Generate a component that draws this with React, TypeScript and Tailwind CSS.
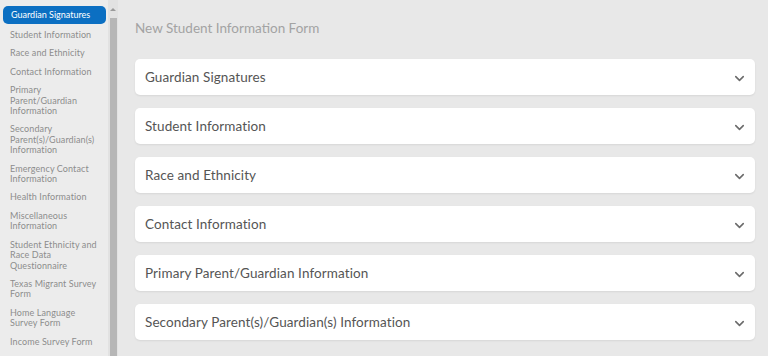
import React from 'react';
import { ChevronDown } from 'lucide-react';

const navItems: string[][] = [
  ['Guardian Signatures'],
  ['Student Information'],
  ['Race and Ethnicity'],
  ['Contact Information'],
  ['Primary', 'Parent/Guardian', 'Information'],
  ['Secondary', 'Parent(s)/Guardian(s)', 'Information'],
  ['Emergency Contact', 'Information'],
  ['Health Information'],
  ['Miscellaneous', 'Information'],
  ['Student Ethnicity and', 'Race Data', 'Questionnaire'],
  ['Texas Migrant Survey', 'Form'],
  ['Home Language', 'Survey Form'],
  ['Income Survey Form'],
  ['Food Distribution Form'],
];

const sections = [
  'Guardian Signatures',
  'Student Information',
  'Race and Ethnicity',
  'Contact Information',
  'Primary Parent/Guardian Information',
  'Secondary Parent(s)/Guardian(s) Information',
];

export default function App() {
  return (
    <div className="w-[768px] h-[356px] overflow-hidden flex bg-[#e8e8e8] font-['Lato',sans-serif]">
      {/* Sidebar */}
      <div className="w-[108px] shrink-0 bg-[#ececec] pt-[6px] flex flex-col gap-[8px]">
        {navItems.map((lines, i) =>
          i === 0 ? (
            <div
              key={i}
              className="ml-[3px] -mb-[2px] w-[103px] h-[18px] rounded-[5px] bg-[#0b6fc2] text-white text-[9px] leading-[18px] pl-[8px] whitespace-nowrap"
            >
              {lines[0]}
            </div>
          ) : (
            <div key={i} className="pl-[10px] text-[9px] leading-[10.4px] text-[#8c8c8c] whitespace-nowrap tracking-[0.1px]">
              {lines.map((l, j) => (
                <div key={j}>{l}</div>
              ))}
            </div>
          )
        )}
      </div>

      {/* Scrollbar */}
      <div className="w-[10px] shrink-0 bg-[#e2e2e2] flex flex-col items-center">
        <div className="h-[18px] flex items-start pt-[8px]">
          <div className="w-0 h-0 border-l-[3px] border-r-[3px] border-b-[3px] border-l-transparent border-r-transparent border-b-[#9a9a9a]" />
        </div>
        <div className="w-[7px] flex-1 bg-[#b6b6b6]" />
      </div>

      {/* Main */}
      <div className="flex-1 pl-[17px] pr-[13px] pt-[19px]">
        <div className="text-[13.5px] leading-[18px] text-[#a3a3a3] mb-[22px]">New Student Information Form</div>
        <div className="flex flex-col gap-[13px]">
          {sections.map((s) => (
            <div
              key={s}
              className="h-[36px] bg-white rounded-[5px] shadow-[0_1px_2px_rgba(0,0,0,0.08)] flex items-center justify-between pl-[10px] pr-[8px]"
            >
              <span className="text-[13.5px] text-[#555555] tracking-[0.1px]">{s}</span>
              <ChevronDown className="w-[15px] h-[15px] text-[#6b6b6b] mt-[2px]" strokeWidth={2.5} />
            </div>
          ))}
        </div>
      </div>
    </div>
  );
}
